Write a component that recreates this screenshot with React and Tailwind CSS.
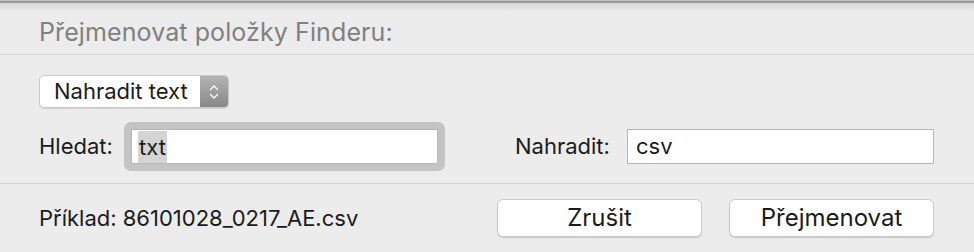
import React from 'react';

const font = { fontFamily: 'Inter, "Noto Sans", sans-serif' };

const Chevrons = () => (
  <svg className="w-[12px] h-[20px]" viewBox="0 0 12 20" fill="none" stroke="white" strokeWidth={1.4} strokeLinecap="round" strokeLinejoin="round">
    <path d="M2.5 7.5L6 4L9.5 7.5" />
    <path d="M2.5 12.5L6 16L9.5 12.5" />
  </svg>
);

const App = () => {
  return (
    <div className="w-[974px] h-[252px] bg-[#ececec] flex flex-col overflow-hidden text-[#1b1b1b]" style={font}>
      <div className="h-[1px] bg-[#bdbdbd]" />
      <div className="h-[2px] bg-[#9a9a9a]" />
      <div className="h-[9px] bg-gradient-to-b from-[#d4d4d4] to-[#ececec]" />

      <div className="h-[42px] pl-[39px] pt-[5px]">
        <h1 className="text-[25px] leading-[30px] tracking-[0.1px] text-[#808080]">Přejmenovat položky Finderu:</h1>
      </div>
      <div className="h-[1px] bg-[#d3d3d3]" />

      <div className="h-[128px] pl-[39px] pt-[20px] flex flex-col">
        <div className="w-[190px] h-[33px] flex rounded-[5px] bg-white border border-[#c9c9c9] shadow-[0_1px_1px_rgba(0,0,0,0.12)] overflow-hidden">
          <div className="flex-1 pl-[14px] flex items-center text-[22px]">Nahradit text</div>
          <div className="w-[28px] flex items-center justify-center bg-gradient-to-b from-[#b4b4b4] to-[#888888]">
            <Chevrons />
          </div>
        </div>

        <div className="mt-[14px] flex items-center">
          <span className="w-[85px] text-[22px]">Hledat:</span>
          <div className="w-[321px] h-[49px] rounded-[7px] bg-[#c4c4c4] p-[7px]">
            <div className="h-full bg-white border border-[#b7b7b7] flex items-center pl-[6px]">
              <span className="bg-[#d4d4d4] text-[22px] leading-[32px] px-[1px]">txt</span>
            </div>
          </div>
          <span className="ml-[70px] w-[112px] text-[22px]">Nahradit:</span>
          <div className="w-[307px] h-[35px] bg-white border border-[#b7b7b7] flex items-center pl-[8px] text-[22px]">
            csv
          </div>
        </div>
      </div>
      <div className="h-[1px] bg-[#d3d3d3]" />

      <div className="flex-1 pl-[39px] pt-[15px] flex items-start">
        <span className="w-[458px] text-[22px] leading-[38px]">Příklad: 86101028_0217_AE.csv</span>
        <button className="w-[205px] h-[38px] rounded-[6px] bg-white border border-[#cbcbcb] shadow-[0_1px_1px_rgba(0,0,0,0.15)] text-[24px]">Zrušit</button>
        <button className="ml-[27px] w-[205px] h-[38px] rounded-[6px] bg-white border border-[#cbcbcb] shadow-[0_1px_1px_rgba(0,0,0,0.15)] text-[24px]">Přejmenovat</button>
      </div>
    </div>
  );
};

export default App;
